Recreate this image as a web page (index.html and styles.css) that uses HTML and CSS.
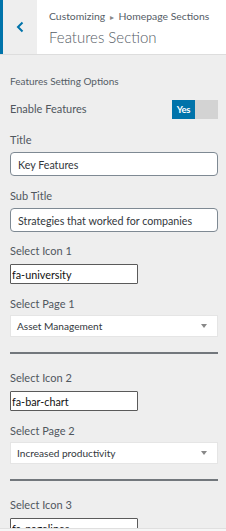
FILE: index.html
```html
<!DOCTYPE html>
<html lang="en">
<head>
<meta charset="utf-8">
<title>Features Section</title>
<link rel="stylesheet" href="styles.css">
</head>
<body>
<div class="panel">
  <header class="head">
    <button class="back" aria-label="Back">
      <svg width="8" height="12" viewBox="0 0 8 12"><path d="M6.5 1.5 L2 6 L6.5 10.5" fill="none" stroke="#0073aa" stroke-width="2"/></svg>
    </button>
    <div class="head-text">
      <div class="crumb">Customizing <span class="sep">▸</span> Homepage Sections</div>
      <div class="head-title">Features Section</div>
    </div>
  </header>
  <main class="body">
    <div class="section-title">Features Setting Options</div>
    <div class="toggle-row">
      <span class="label">Enable Features</span>
      <span class="toggle"><span class="on">Yes</span><span class="off"></span></span>
    </div>
    <div class="control c-title">
      <div class="label">Title</div>
      <input class="text" type="text" value="Key Features">
    </div>
    <div class="control c-sub">
      <div class="label">Sub Title</div>
      <input class="text" type="text" value="Strategies that worked for companies">
    </div>
    <div class="control c-icon">
      <div class="label">Select Icon 1</div>
      <input class="icon" type="text" value="fa-university">
    </div>
    <div class="control c-page">
      <div class="label">Select Page 1</div>
      <div class="select"><span>Asset Management</span><span class="arrow"></span></div>
    </div>
    <hr class="rule">
    <div class="control c-icon2">
      <div class="label">Select Icon 2</div>
      <input class="icon" type="text" value="fa-bar-chart">
    </div>
    <div class="control c-page">
      <div class="label">Select Page 2</div>
      <div class="select"><span>Increased productivity</span><span class="arrow"></span></div>
    </div>
    <hr class="rule">
    <div class="control c-icon3">
      <div class="label">Select Icon 3</div>
      <input class="icon" type="text" value="fa-pagelines">
    </div>
  </main>
  <div class="foot"></div>
</div>
</body>
</html>
```
FILE: styles.css
```css
html, body {
  margin: 0;
  padding: 0;
  height: 100%;
  overflow: hidden;
  background: #eee;
  font-family: "Lato", "Open Sans", sans-serif;
}
.panel {
  height: 531px;
  display: flex;
  flex-direction: column;
  position: relative;
}
.head {
  display: flex;
  height: 54px;
  border-bottom: 1px solid #ddd;
  background: #fff;
  flex-shrink: 0;
}
.back {
  width: 37px;
  height: 54px;
  border: 0;
  border-left: 3px solid #0073aa;
  background: #eee;
  padding: 0;
  display: flex;
  align-items: center;
  justify-content: center;
  box-sizing: border-box;
}
.head-text {
  padding: 9px 0 0 12px;
}
.crumb {
  font-size: 10.4px;
  line-height: 14px;
  color: #555d66;
  white-space: nowrap;
}
.crumb .sep {
  font-size: 8px;
  color: #888;
  padding: 0 2px;
}
.head-title {
  font-size: 15px;
  font-weight: 300;
  line-height: 22px;
  color: #555d66;
  margin-top: 2px;
  white-space: nowrap;
}
.body {
  flex: 1;
  overflow: hidden;
  padding: 18px 8px 0 10px;
}
.section-title {
  font-size: 10px;
  line-height: 16px;
  color: #555d66;
}
.label {
  font-size: 11px;
  line-height: 18px;
  color: #50575e;
}
.toggle-row {
  margin-top: 10px;
  display: flex;
  justify-content: space-between;
  align-items: center;
  height: 20px;
}
.toggle {
  display: flex;
  width: 46px;
  height: 19px;
}
.toggle .on {
  width: 23px;
  background: #0073aa;
  color: #fff;
  font-size: 9.5px;
  font-weight: 700;
  line-height: 19px;
  text-align: center;
  letter-spacing: -0.3px;
}
.toggle .off {
  width: 23px;
  background: #d3d3d3;
}
.control { margin-top: 11px; }
.c-title { margin-top: 12px; }
.c-icon { margin-top: 10px; }
.c-icon2, .c-icon3 { margin-top: 15px; }
.text {
  display: block;
  box-sizing: border-box;
  width: 100%;
  height: 24px;
  margin-top: 3px;
  border: 1px solid #7e8993;
  border-radius: 4px;
  padding: 0 7px;
  font-family: inherit;
  font-size: 10.7px;
  color: #32373c;
  background: #fff;
}
.icon {
  display: block;
  box-sizing: border-box;
  width: 128px;
  height: 20px;
  margin-top: 4px;
  border: 1px solid #5a5a5a;
  border-radius: 1px;
  padding: 0 1px;
  font-family: inherit;
  font-size: 10.8px;
  color: #111;
  background: #fff;
}
.select {
  margin-top: 2px;
  height: 22px;
  box-sizing: border-box;
  background: #fff;
  border: 1px solid #e5e5e5;
  display: flex;
  align-items: center;
  justify-content: space-between;
  padding: 0 10px 0 6px;
  font-size: 10.1px;
  color: #32373c;
}
.arrow {
  width: 0;
  height: 0;
  border-left: 3px solid transparent;
  border-right: 3px solid transparent;
  border-top: 4px solid #888;
}
.rule {
  margin: 15px 0 0;
  border: 0;
  height: 2px;
  background: #72777c;
}
.foot {
  position: absolute;
  left: 0;
  right: 0;
  bottom: 0;
  height: 2px;
  background: #f6f6f6;
  border-top: 1px solid #e0e0e0;
}
```
